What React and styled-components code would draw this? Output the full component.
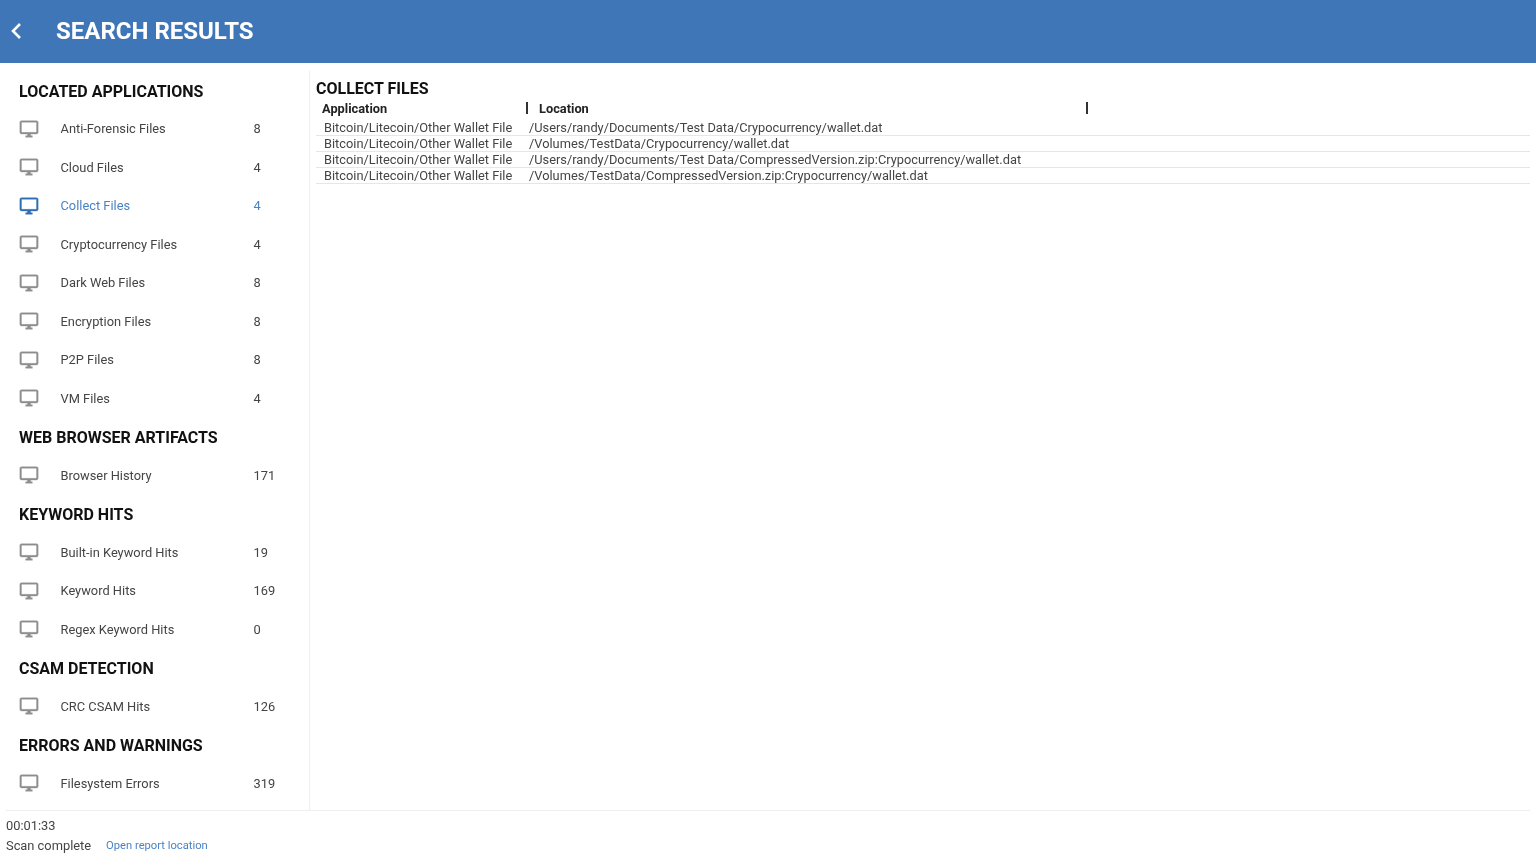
import React from "react";
import styled, { createGlobalStyle } from "styled-components";

const Global = createGlobalStyle`
  html, body { margin: 0; padding: 0; background: #fff; }
  body { font-family: Roboto, "Liberation Sans", sans-serif; color: #3a3a3a; }
  * { box-sizing: border-box; }
`;
const Page = styled.div`
  width: 1536px; height: 865px; display: flex; flex-direction: column; overflow: hidden; background: #fff;
  filter: blur(0.4px);
`;
const Header = styled.header`
  height: 63px; flex: none; background: #3f76b7; display: flex; align-items: center; color: #fff;
  padding-bottom: 2px;
`;
const BackButton = styled.span`
  width: 56px; padding-left: 8px; display: flex; align-items: center; height: 100%;
`;
const Title = styled.h1`
  margin: 0; font-size: 24px; font-weight: 700; letter-spacing: 0;
`;
const Main = styled.div`
  flex: none; height: 747px; display: flex; padding-top: 8px;
`;
const Sidebar = styled.nav`
  width: 310px; flex: none; height: 739px; border-right: 1px solid #eee; padding-left: 19px;
`;
const SectionTitle = styled.h2`
  margin: 0; height: 38.5px; padding-top: 2px; display: flex; align-items: center; font-size: 16px; font-weight: 700; color: #111;
`;
const Row = styled.div`
  height: 38.5px; display: flex; align-items: center; font-size: 12.85px;
  color: ${p => (p.$active ? "#4a83c4" : "#444")};
`;
const IconSlot = styled.span`
  width: 41.5px; flex: none; display: flex; align-items: center; margin-left: -0.5px; padding-right: 0;
  color: ${p => (p.$active ? "#2f6db5" : "#8e8e8e")};
`;
const RowLabel = styled.span`
  width: 193.5px; flex: none; padding-left: 0.5px;
`;
const Count = styled.span``;
const Content = styled.section`
  flex: 1; padding: 9px 6px 0 6px;
`;
const ContentTitle = styled.h2`
  margin: 0; height: 18px; line-height: 18px; font-size: 16px; font-weight: 700; color: #111;
`;
const HeadRow = styled.div`
  height: 20px; margin-bottom: 2px; display: flex; align-items: center; font-size: 12.8px; font-weight: 700; color: #222;
`;
const HeadCell = styled.span`
  width: ${p => p.$w}px; padding-left: ${p => p.$pad}px; flex: none;
  display: flex; justify-content: space-between; align-items: center;
`;
const Divider = styled.i`
  display: block; width: 2px; height: 12px; background: #333;
`;
const BodyRow = styled.div`
  height: 16px; display: flex; align-items: center; font-size: 12.82px; color: #444;
  border-bottom: 1px solid #e6e6e6; line-height: 15px; white-space: nowrap;
`;
const AppCell = styled.span`
  width: 213px; flex: none; padding-left: 8px;
`;
const Footer = styled.footer`
  flex: none; height: 55px; margin: 0 6px; border-top: 1px solid #eee; padding-top: 4px; font-size: 12.85px; color: #444;
`;
const FooterLine = styled.div`
  height: 20px; display: flex; align-items: center;
`;
const ReportLink = styled.a`
  margin-left: 15px; font-size: 11.2px; color: #4a83c4; text-decoration: none;
`;

const Monitor = () => (
  <svg width="20" height="20" viewBox="0 0 24 24" fill="currentColor" stroke="currentColor" strokeWidth="0.4" aria-hidden="true">
    <path d="M21 2H3c-1.1 0-2 .9-2 2v12c0 1.1.9 2 2 2h7v2H8v2h8v-2h-2v-2h7c1.1 0 2-.9 2-2V4c0-1.1-.9-2-2-2zm0 14H3V4h18v12z" />
  </svg>
);

const sections = [
  ["LOCATED APPLICATIONS", [["Anti-Forensic Files", 8], ["Cloud Files", 4], ["Collect Files", 4, true], ["Cryptocurrency Files", 4], ["Dark Web Files", 8], ["Encryption Files", 8], ["P2P Files", 8], ["VM Files", 4]]],
  ["WEB BROWSER ARTIFACTS", [["Browser History", 171]]],
  ["KEYWORD HITS", [["Built-in Keyword Hits", 19], ["Keyword Hits", 169], ["Regex Keyword Hits", 0]]],
  ["CSAM DETECTION", [["CRC CSAM Hits", 126]]],
  ["ERRORS AND WARNINGS", [["Filesystem Errors", 319]]],
];
const files = [
  "/Users/randy/Documents/Test Data/Crypocurrency/wallet.dat",
  "/Volumes/TestData/Crypocurrency/wallet.dat",
  "/Users/randy/Documents/Test Data/CompressedVersion.zip:Crypocurrency/wallet.dat",
  "/Volumes/TestData/CompressedVersion.zip:Crypocurrency/wallet.dat",
];

export default function App() {
  return (
    <Page>
      <Global />
      <Header>
        <BackButton>
          <svg width="16" height="18" viewBox="0 0 16 18" fill="none" stroke="#fff" strokeWidth="2.6" aria-hidden="true">
            <path d="M12 2 L5 9 L12 16" />
          </svg>
        </BackButton>
        <Title>SEARCH RESULTS</Title>
      </Header>
      <Main>
        <Sidebar>
          {sections.map(([title, rows]) => (
            <React.Fragment key={title}>
              <SectionTitle>{title}</SectionTitle>
              {rows.map(([label, n, active]) => (
                <Row key={label} $active={active}>
                  <IconSlot $active={active}><Monitor /></IconSlot>
                  <RowLabel>{label}</RowLabel>
                  <Count>{n}</Count>
                </Row>
              ))}
            </React.Fragment>
          ))}
        </Sidebar>
        <Content>
          <ContentTitle>COLLECT FILES</ContentTitle>
          <HeadRow>
            <HeadCell $w={211.5} $pad={6}>Application<Divider /></HeadCell>
            <HeadCell $w={560} $pad={11.5}>Location<Divider /></HeadCell>
          </HeadRow>
          {files.map((f) => (
            <BodyRow key={f}>
              <AppCell>Bitcoin/Litecoin/Other Wallet File</AppCell>
              <span>{f}</span>
            </BodyRow>
          ))}
        </Content>
      </Main>
      <Footer>
        <FooterLine>00:01:33</FooterLine>
        <FooterLine>Scan complete<ReportLink>Open report location</ReportLink></FooterLine>
      </Footer>
    </Page>
  );
}
